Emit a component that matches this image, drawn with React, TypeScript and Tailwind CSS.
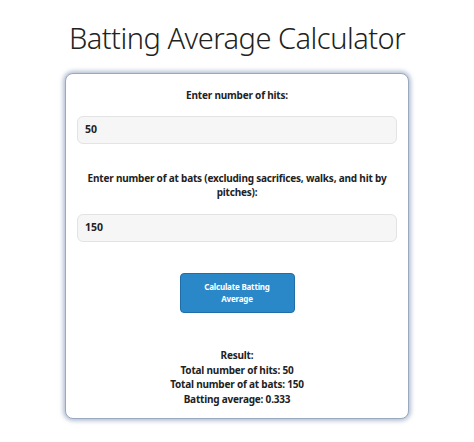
import React from "react";

export default function App() {
  return (
    <div className="w-[474px] h-[442px] bg-white flex flex-col items-center" style={{ fontFamily: '"Noto Sans", "Open Sans", sans-serif' }}>
      <h1 className="mt-[18px] text-[29px] leading-[40px] font-light text-[#222] tracking-[-0.5px]">Batting Average Calculator</h1>
      <div className="mt-[15px] w-[344px] h-[346px] rounded-[8px] border border-[#9aa8c0] shadow-[0_0_4px_2px_rgba(120,140,175,0.55)] bg-white flex flex-col items-center px-[11px]">
        <label className="mt-[14px] text-[10px] leading-[14px] font-bold text-[#222] tracking-[-0.2px]">Enter number of hits:</label>
        <div className="mt-[14px] w-full h-[28px] rounded-[6px] border border-[#e3e3e3] bg-[#f6f6f6] flex items-center px-[7px] text-[10.5px] font-bold text-[#222]">50</div>
        <label className="mt-[27px] text-[10px] leading-[14px] font-bold text-[#222] tracking-[-0.2px] text-center">Enter number of at bats (excluding sacrifices, walks, and hit by pitches):</label>
        <div className="mt-[15px] w-full h-[28px] rounded-[6px] border border-[#e3e3e3] bg-[#f6f6f6] flex items-center px-[7px] text-[10.5px] font-bold text-[#222]">150</div>
        <button className="mt-[31px] w-[115px] h-[40px] rounded-[4px] bg-[#2b88c8] border border-[#1f6ea8] text-white text-[8px] leading-[12px] font-bold tracking-[-0.2px] flex items-center justify-center px-[8px] text-center">Calculate Batting<br />Average</button>
        <div className="mt-[35px] text-[10px] leading-[14.7px] font-bold text-[#222] tracking-[-0.2px] text-center">
          <div>Result:</div>
          <div>Total number of hits: 50</div>
          <div>Total number of at bats: 150</div>
          <div>Batting average: 0.333</div>
        </div>
      </div>
    </div>
  );
}
